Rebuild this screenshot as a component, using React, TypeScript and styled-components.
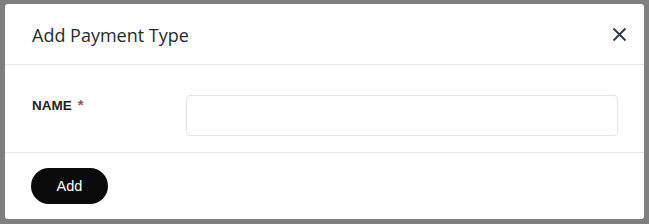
import React, { useState } from 'react'
import styled, { createGlobalStyle } from 'styled-components'

const GlobalStyle = createGlobalStyle`
  html, body {
    margin: 0;
    padding: 0;
    background: #7f7f7f;
    font-family: Lato, "Open Sans", "Liberation Sans", sans-serif;
  }
`

const Backdrop = styled.div`
  width: 649px;
  height: 224px;
  box-sizing: border-box;
  padding: 4px 5px 5px 5px;
  background: #7f7f7f;
`

const Modal = styled.div`
  width: 639px;
  height: 215px;
  background: #fff;
  border-radius: 3px;
  display: flex;
  flex-direction: column;
  overflow: hidden;
`

const Header = styled.div`
  height: 61px;
  flex-shrink: 0;
  box-sizing: border-box;
  display: flex;
  align-items: center;
  justify-content: space-between;
  padding: 0 15px 0 27px;
  border-bottom: 1px solid #e4e7ec;
`

const Title = styled.h5`
  margin: 0;
  font-family: "Open Sans", Lato, sans-serif;
  font-size: 18px;
  font-weight: 400;
  color: #262b30;
  padding-top: 1px;
`

const CloseButton = styled.button`
  border: 0;
  background: none;
  padding: 0;
  width: 20px;
  height: 20px;
  display: flex;
  align-items: center;
  justify-content: center;
  cursor: pointer;
  color: #2e3a4a;
`

const Body = styled.div`
  height: 88px;
  flex-shrink: 0;
  box-sizing: border-box;
  padding: 30px 26px 0 27px;
  border-bottom: 1px solid #e4e7ec;
`

const FieldRow = styled.div`
  display: grid;
  grid-template-columns: 154px 1fr;
  align-items: start;
`

const Label = styled.label`
  font-family: "Liberation Sans", Arial, sans-serif;
  font-size: 13.5px;
  font-weight: 700;
  color: #222;
  padding-top: 1px;
`

const Required = styled.span`
  color: #a5524f;
  font-size: 15px;
  margin-left: 6px;
`

const Input = styled.input`
  height: 41px;
  box-sizing: border-box;
  border: 1px solid #e2e6ec;
  border-radius: 4px;
  padding: 0 12px;
  font-size: 14px;
  font-family: inherit;
  outline: none;
`

const Footer = styled.div`
  flex: 1;
  display: flex;
  align-items: flex-start;
  padding: 15px 26px 0 26px;
`

const PrimaryButton = styled.button`
  width: 77px;
  height: 36px;
  border: 0;
  border-radius: 18px;
  background: #0a0a0a;
  color: #fff;
  font-family: "Liberation Sans", Arial, sans-serif;
  font-size: 14.5px;
  cursor: pointer;
`

const App = () => {
  const [name, setName] = useState('')

  return (
    <>
      <GlobalStyle />
      <Backdrop>
        <Modal>
          <Header>
            <Title>Add Payment Type</Title>
            <CloseButton aria-label="Close">
              <svg width="15" height="15" viewBox="0 0 15 15" fill="none" stroke="currentColor" strokeWidth="1.9">
                <path d="M1.5 1.5 L13.5 13.5 M13.5 1.5 L1.5 13.5" />
              </svg>
            </CloseButton>
          </Header>
          <Body>
            <FieldRow>
              <Label>
                NAME<Required>*</Required>
              </Label>
              <Input value={name} onChange={(e) => setName(e.target.value)} />
            </FieldRow>
          </Body>
          <Footer>
            <PrimaryButton>Add</PrimaryButton>
          </Footer>
        </Modal>
      </Backdrop>
    </>
  )
}

export default App
